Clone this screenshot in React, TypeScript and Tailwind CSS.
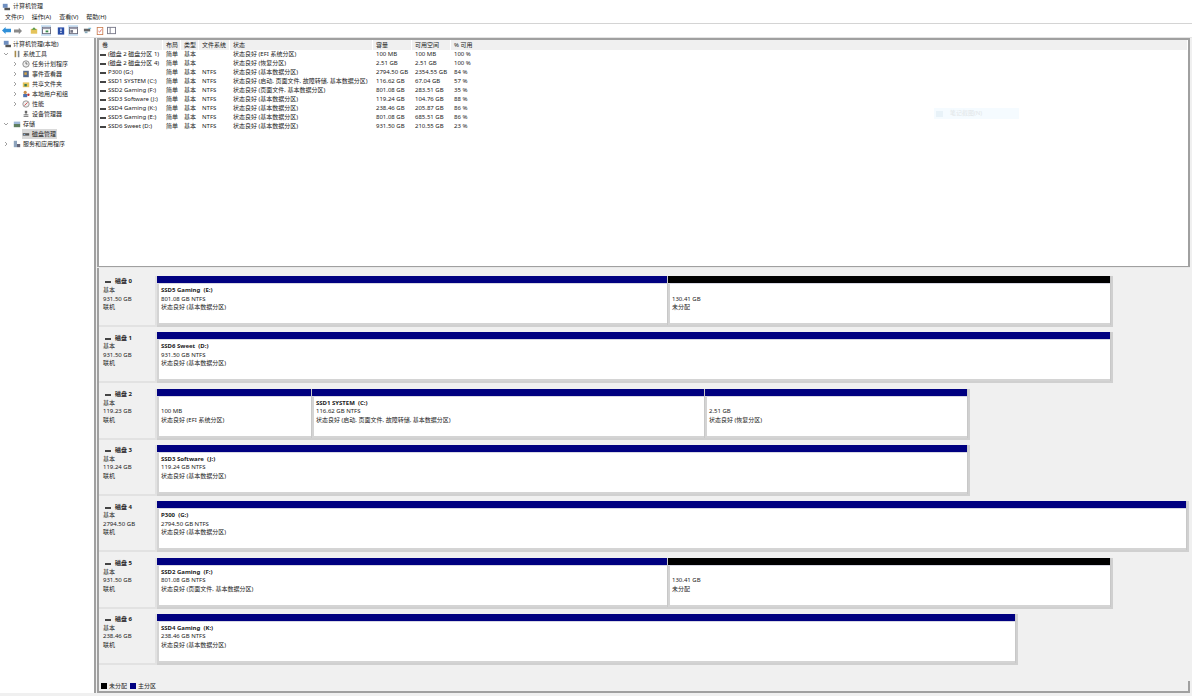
import type { ReactNode } from "react";

const FONT = "font-['Noto_Sans','Noto_Sans_CJK_SC',sans-serif]";

const COLS = [
  { label: "卷", w: "w-[64px]" },
  { label: "布局", w: "w-[18px]" },
  { label: "类型", w: "w-[18px]" },
  { label: "文件系统", w: "w-[31px]" },
  { label: "状态", w: "w-[143px]" },
  { label: "容量", w: "w-[39px]" },
  { label: "可用空间", w: "w-[39px]" },
  { label: "% 可用", w: "flex-1" },
];

const VOLUMES = [
  ["(磁盘 2 磁盘分区 1)", "简单", "基本", "", "状态良好 (EFI 系统分区)", "100 MB", "100 MB", "100 %"],
  ["(磁盘 2 磁盘分区 4)", "简单", "基本", "", "状态良好 (恢复分区)", "2.51 GB", "2.51 GB", "100 %"],
  ["P300 (G:)", "简单", "基本", "NTFS", "状态良好 (基本数据分区)", "2794.50 GB", "2354.55 GB", "84 %"],
  ["SSD1 SYSTEM (C:)", "简单", "基本", "NTFS", "状态良好 (启动, 页面文件, 故障转储, 基本数据分区)", "116.62 GB", "67.04 GB", "57 %"],
  ["SSD2 Gaming (F:)", "简单", "基本", "NTFS", "状态良好 (页面文件, 基本数据分区)", "801.08 GB", "283.51 GB", "35 %"],
  ["SSD3 Software (J:)", "简单", "基本", "NTFS", "状态良好 (基本数据分区)", "119.24 GB", "104.76 GB", "88 %"],
  ["SSD4 Gaming (K:)", "简单", "基本", "NTFS", "状态良好 (基本数据分区)", "238.46 GB", "205.87 GB", "86 %"],
  ["SSD5 Gaming (E:)", "简单", "基本", "NTFS", "状态良好 (基本数据分区)", "801.08 GB", "685.51 GB", "86 %"],
  ["SSD6 Sweet (D:)", "简单", "基本", "NTFS", "状态良好 (基本数据分区)", "931.50 GB", "210.55 GB", "23 %"],
];

type Part = { w: string; name?: string; size?: string; status: string; free?: boolean };

const DISKS: { name: string; cap: string; w: string; parts: Part[] }[] = [
  {
    name: "磁盘 0",
    cap: "931.50 GB",
    w: "w-[956px]",
    parts: [
      { w: "w-[511px]", name: "SSD5 Gaming  (E:)", size: "801.08 GB NTFS", status: "状态良好 (基本数据分区)" },
      { w: "flex-1", size: "130.41 GB", status: "未分配", free: true },
    ],
  },
  {
    name: "磁盘 1",
    cap: "931.50 GB",
    w: "w-[956px]",
    parts: [{ w: "flex-1", name: "SSD6 Sweet  (D:)", size: "931.50 GB NTFS", status: "状态良好 (基本数据分区)" }],
  },
  {
    name: "磁盘 2",
    cap: "119.23 GB",
    w: "w-[813px]",
    parts: [
      { w: "w-[155px]", size: "100 MB", status: "状态良好 (EFI 系统分区)" },
      { w: "w-[393px]", name: "SSD1 SYSTEM  (C:)", size: "116.62 GB NTFS", status: "状态良好 (启动, 页面文件, 故障转储, 基本数据分区)" },
      { w: "flex-1", size: "2.51 GB", status: "状态良好 (恢复分区)" },
    ],
  },
  {
    name: "磁盘 3",
    cap: "119.24 GB",
    w: "w-[813px]",
    parts: [{ w: "flex-1", name: "SSD3 Software  (J:)", size: "119.24 GB NTFS", status: "状态良好 (基本数据分区)" }],
  },
  {
    name: "磁盘 4",
    cap: "2794.50 GB",
    w: "w-[1032px]",
    parts: [{ w: "flex-1", name: "P300  (G:)", size: "2794.50 GB NTFS", status: "状态良好 (基本数据分区)" }],
  },
  {
    name: "磁盘 5",
    cap: "931.50 GB",
    w: "w-[956px]",
    parts: [
      { w: "w-[511px]", name: "SSD2 Gaming  (F:)", size: "801.08 GB NTFS", status: "状态良好 (页面文件, 基本数据分区)" },
      { w: "flex-1", size: "130.41 GB", status: "未分配", free: true },
    ],
  },
  {
    name: "磁盘 6",
    cap: "238.46 GB",
    w: "w-[861px]",
    parts: [{ w: "flex-1", name: "SSD4 Gaming  (K:)", size: "238.46 GB NTFS", status: "状态良好 (基本数据分区)" }],
  },
];

function DriveIcon() {
  return <span className="mr-[2px] inline-block h-[2px] w-[6px] shrink-0 bg-[#444]" />;
}

function TreeIcon({ kind }: { kind: string }) {
  const icons: Record<string, ReactNode> = {
    root: <><rect x="1" y="1" width="6" height="5" fill="#6f8fc0" /><rect x="3" y="6" width="7" height="3" fill="#555" /></>,
    tools: <><rect x="2" y="1" width="2" height="8" fill="#a88b4a" /><rect x="6" y="1" width="2" height="8" fill="#7a8794" /></>,
    clock: <><circle cx="5" cy="5" r="4" fill="#eee" stroke="#777" /><path d="M5 2.5V5h2" stroke="#555" fill="none" /></>,
    log: <><rect x="1.5" y="1" width="7" height="8" fill="#556a8e" /><rect x="3" y="3" width="3" height="3" fill="#d9a441" /></>,
    share: <><rect x="1" y="3" width="8" height="6" fill="#e6c45c" /><rect x="3" y="5" width="3" height="3" fill="#3a7a50" /></>,
    users: <><circle cx="4" cy="3" r="2" fill="#c98d4a" /><rect x="1.5" y="5" width="5" height="4" fill="#4a70b0" /><circle cx="8" cy="6" r="1.5" fill="#b33" /></>,
    perf: <><circle cx="5" cy="5" r="4" fill="#eee" stroke="#888" /><path d="M3 7l4-4" stroke="#c33" /></>,
    device: <><rect x="3.5" y="1" width="3" height="3" fill="#666" /><path d="M5 4v2M2 8h6M2 6h6" stroke="#555" /></>,
    storage: <><rect x="1" y="2" width="8" height="3" fill="#9fb8d8" /><rect x="1" y="5" width="8" height="4" fill="#5f7f5f" /></>,
    disk: <><rect x="1" y="4" width="8" height="3" fill="#555" /><rect x="2" y="5" width="2" height="1" fill="#9cf" /></>,
    service: <><rect x="1" y="1" width="4" height="8" fill="#8ea4bd" /><rect x="5" y="5" width="4" height="4" fill="#667" /></>,
  };
  return <svg viewBox="0 0 10 10" className="mr-[2px] h-[8px] w-[8px] shrink-0">{icons[kind]}</svg>;
}

function Chevron({ open }: { open?: boolean }) {
  return (
    <svg viewBox="0 0 6 6" className="h-[6px] w-[6px] shrink-0">
      <path d={open ? "M1 2l2 2 2-2" : "M2 1l2 2-2 2"} fill="none" stroke="#888" strokeWidth="0.8" />
    </svg>
  );
}

function TreeRow(props: { pad: string; icon: string; label: string; open?: boolean; arrow?: boolean; active?: boolean; root?: boolean }) {
  return (
    <div className={"flex h-[10px] items-center " + props.pad}>
      {!props.root && <span className="w-[10px] shrink-0">{props.arrow && <Chevron open={props.open} />}</span>}
      <div className={"flex h-[10px] items-center pr-[1px] " + (props.active ? "bg-[#d9d9d9]" : "")}>
        <TreeIcon kind={props.icon} />
        <span className="whitespace-nowrap">{props.label}</span>
      </div>
    </div>
  );
}

function Toolbar() {
  return (
    <div className="flex h-[14px] items-center border-b border-[#e4e4e4] pl-[2px]">
      <svg viewBox="0 0 10 10" className="h-[9px] w-[9px]"><path d="M0 5l4-4v2h6v4H4v2z" fill="#2f8fd8" /></svg>
      <svg viewBox="0 0 10 10" className="ml-[3px] h-[8px] w-[8px]"><path d="M10 5L6 1v2H0v4h6v2z" fill="#8a8a8a" /></svg>
      <svg viewBox="0 0 10 10" className="ml-[8px] h-[9px] w-[8px]"><rect x="1" y="3" width="8" height="6" fill="#e4c35a" /><path d="M5 1l3 3H2z" fill="#5a9a48" /></svg>
      <span className="ml-[3px] flex h-[11px] w-[10px] items-center justify-center bg-[#cfe4f5]"><svg viewBox="0 0 10 10" className="h-[9px] w-[9px]"><rect x="0.5" y="1.5" width="9" height="7" fill="#fff" stroke="#667" /><rect x="0.5" y="1.5" width="9" height="2" fill="#99a" /><rect x="4" y="5" width="3" height="2" fill="#3a8a4a" /></svg></span>
      <svg viewBox="0 0 10 10" className="ml-[6px] h-[10px] w-[8px]"><rect x="1" y="0.5" width="8" height="9" fill="#2b4fa8" /><rect x="4.2" y="2" width="1.5" height="3" fill="#fff" /><rect x="4.2" y="6" width="1.5" height="1.5" fill="#fff" /></svg>
      <span className="ml-[3px] flex h-[11px] w-[10px] items-center justify-center bg-[#cfe4f5]"><svg viewBox="0 0 10 10" className="h-[9px] w-[9px]"><rect x="0.5" y="1.5" width="9" height="7" fill="#fff" stroke="#667" /><rect x="0.5" y="1.5" width="9" height="2" fill="#99a" /><rect x="1.5" y="4.5" width="3" height="3" fill="#778" /></svg></span>
      <svg viewBox="0 0 10 10" className="ml-[5px] h-[9px] w-[9px]"><rect x="1" y="3" width="7" height="3" fill="#666" /><rect x="2" y="6" width="3" height="2" fill="#8ab" /><rect x="6" y="2" width="3" height="1" fill="#5ac" /></svg>
      <svg viewBox="0 0 10 10" className="ml-[4px] h-[10px] w-[8px]"><rect x="1.5" y="0.5" width="7" height="9" fill="#fff" stroke="#c9784a" /><path d="M3 5l1.5 1.5L7 3" fill="none" stroke="#d55" /></svg>
      <svg viewBox="0 0 10 10" className="ml-[3px] h-[9px] w-[9px]"><rect x="0.5" y="1.5" width="9" height="7" fill="#fff" stroke="#778" /><path d="M3.5 1.5v7" stroke="#778" /></svg>
    </div>
  );
}

function VolumeTable() {
  return (
    <div className="flex h-[228px] flex-col border-2 border-b-0 border-[#a0a0a0] bg-white">
      <div className="flex h-[10px] bg-[#f0f0f0]">
        {COLS.map((c) => (
          <div key={c.label} className={c.w + " flex items-center overflow-hidden whitespace-nowrap border-r border-white pl-[3px]"}>
            {c.label}
          </div>
        ))}
      </div>
      <div>
        {VOLUMES.map((v) => (
          <div key={v[0]} className="flex h-[9px] items-center">
            {v.map((cell, i) => (
              <div key={i} className={COLS[i].w + " flex items-center overflow-hidden whitespace-nowrap " + (i === 0 ? "pl-[1px]" : "pl-[3px]")}>
                {i === 0 && <DriveIcon />}
                {cell}
              </div>
            ))}
          </div>
        ))}
      </div>
    </div>
  );
}

function Partition({ part }: { part: Part }) {
  return (
    <div className={part.w + " flex min-w-0 flex-col border-r border-[#c8c8c8]"}>
      <div className={"h-[7px] shrink-0 " + (part.free ? "bg-black" : "bg-[#000080]")} />
      <div className="h-[1px] shrink-0 bg-[#d8d8e4]" />
      <div className="flex-1 border-b-2 border-l-2 border-[#d4d4d4] bg-white pl-[2px] pt-[2px] leading-[8.5px]">
        <div className="h-[8.5px] whitespace-pre font-bold">{part.name ?? ""}</div>
        <div className="whitespace-nowrap">{part.size}</div>
        <div className="whitespace-nowrap">{part.status}</div>
      </div>
    </div>
  );
}

function DiskRow({ disk }: { disk: (typeof DISKS)[number] }) {
  return (
    <div className="flex h-[56.33px] pt-[1px]">
      <div className="h-[51px] w-[58px] shrink-0 border-b-2 border-r-2 border-[#e2e2e2] pl-[4px] pt-[1px] leading-[8.5px]">
        <div className="flex h-[9px] items-center font-bold">
          <span className="ml-[2px]"><DriveIcon /></span>
          <span className="ml-[2px]">{disk.name}</span>
        </div>
        <div>基本</div>
        <div>{disk.cap}</div>
        <div>联机</div>
      </div>
      <div className={disk.w + " flex h-[51px] border-b-2 border-r-2 border-[#d0d0d0]"}>
        {disk.parts.map((p, i) => (
          <Partition key={i} part={p} />
        ))}
      </div>
    </div>
  );
}

export default function App() {
  return (
    <div className={FONT + " relative flex h-[696px] w-[1192px] flex-col overflow-hidden bg-white text-[6px] text-[#222]"}>
      <div className="flex h-[12px] items-center pl-[2px] pt-[1px]">
        <TreeIcon kind="root" />
        <span className="ml-[1px]">计算机管理</span>
      </div>
      <div className="flex h-[12px] items-center gap-[8px] border-b border-[#d4d4d4] pl-[5px]">
        <span>文件(F)</span>
        <span>操作(A)</span>
        <span>查看(V)</span>
        <span>帮助(H)</span>
      </div>
      <Toolbar />
      <div className="flex min-h-0 flex-1 bg-[#f0f0f0] pb-[3px]">
        <div className="w-[96px] shrink-0 border-r-2 border-[#a0a0a0] bg-white pt-[1px]">
          <TreeRow pad="pl-[3px]" icon="root" label="计算机管理(本地)" root />
          <TreeRow pad="pl-[3px]" icon="tools" label="系统工具" arrow open />
          <TreeRow pad="pl-[12px]" icon="clock" label="任务计划程序" arrow />
          <TreeRow pad="pl-[12px]" icon="log" label="事件查看器" arrow />
          <TreeRow pad="pl-[12px]" icon="share" label="共享文件夹" arrow />
          <TreeRow pad="pl-[12px]" icon="users" label="本地用户和组" arrow />
          <TreeRow pad="pl-[12px]" icon="perf" label="性能" arrow />
          <TreeRow pad="pl-[12px]" icon="device" label="设备管理器" />
          <TreeRow pad="pl-[3px]" icon="storage" label="存储" arrow open />
          <TreeRow pad="pl-[12px]" icon="disk" label="磁盘管理" active />
          <TreeRow pad="pl-[3px]" icon="service" label="服务和应用程序" arrow />
        </div>
        <div className="ml-[1px] flex min-w-0 flex-1 flex-col pr-[2px]">
          <VolumeTable />
          <div className="h-[2px] border-t border-[#a0a0a0] bg-[#e8e8e8]" />
          <div className="flex-1 border-l-2 border-[#a0a0a0] pt-[7px]">
            {DISKS.map((d) => (
              <DiskRow key={d.name} disk={d} />
            ))}
          </div>
          <div className="flex h-[12px] items-center gap-[2px] border-x-2 border-b-2 border-[#a0a0a0] pl-[2px]">
            <span className="h-[6px] w-[6px] bg-black" />
            <span>未分配</span>
            <span className="ml-[1px] h-[6px] w-[6px] bg-[#000080]" />
            <span>主分区</span>
          </div>
        </div>
      </div>
      <div className="absolute left-[934px] top-[108px] flex h-[11px] w-[85px] items-center bg-[#f5fbff] pl-[2px] text-[#e2e6e8]">
        <span className="mr-[7px] h-[6px] w-[7px] bg-[#e8f2f8]" />
        笔记截图(N)
      </div>
    </div>
  );
}
